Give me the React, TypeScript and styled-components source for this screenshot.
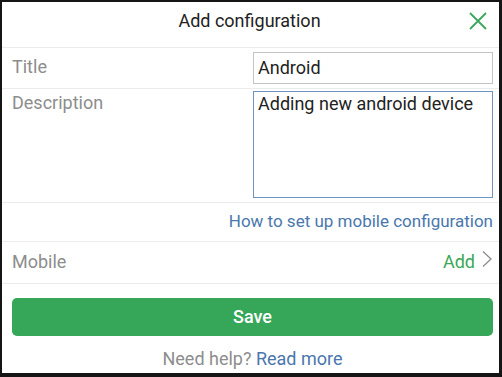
import React from 'react'
import styled, { createGlobalStyle } from 'styled-components'

const GlobalStyle = createGlobalStyle`
  body {
    margin: 0;
    font-family: Roboto, "Liberation Sans", sans-serif;
    background: #fff;
  }
`

const Frame = styled.div`
  box-sizing: border-box;
  width: 502px;
  height: 377px;
  border: solid #151515;
  border-width: 2px 3px 4px 2px;
  display: flex;
  flex-direction: column;
  background: #fff;
`

const Header = styled.header`
  display: grid;
  grid-template-columns: 1fr auto 1fr;
  align-items: start;
  box-sizing: border-box;
  height: 46px;
  padding: 8px 12px 0 10px;
  border-bottom: 1px solid #ececec;
`

const Heading = styled.h1`
  grid-column: 2;
  margin: 0;
  font-size: 18px;
  font-weight: 400;
  color: #222;
`

const CloseButton = styled.button`
  grid-column: 3;
  justify-self: end;
  display: flex;
  margin-top: 2px;
  padding: 0;
  border: 0;
  background: none;
  cursor: pointer;
`

const Row = styled.div<{ $height: number; $align?: string }>`
  display: flex;
  align-items: ${(p) => p.$align ?? 'center'};
  justify-content: space-between;
  height: ${(p) => p.$height}px;
  box-sizing: border-box;
  padding: 0 6px 0 10px;
  border-bottom: 1px solid #ececec;
`

const Label = styled.span<{ $top?: number }>`
  font-size: 18px;
  color: #8d8d8d;
  padding-top: ${(p) => p.$top ?? 0}px;
  padding-bottom: ${(p) => (p.$top === undefined ? 3 : 0)}px;
`

const fieldBase = `
  box-sizing: border-box;
  width: 240px;
  font-family: Roboto, "Liberation Sans", sans-serif;
  font-size: 18px;
  color: #222;
  background: #fff;
  outline: none;
  padding: 0 4px;
`

const TextInput = styled.input`
  ${fieldBase}
  height: 32px;
  border: 1px solid #c4c4c4;
  padding-bottom: 2px;
`

const TextArea = styled.textarea`
  ${fieldBase}
  height: 107px;
  margin-top: 2px;
  border: 1px solid #6e93c4;
  resize: none;
  line-height: 22px;
  padding-top: 1px;
`

const LinkRow = styled(Row)`
  justify-content: flex-end;
`

const Link = styled.a<{ $size?: number }>`
  font-size: ${(p) => p.$size ?? 18}px;
  color: #4a77ad;
  text-decoration: none;
  cursor: pointer;
`

const RowLink = styled(Link)`
  padding-bottom: 3px;
`

const AddAction = styled.span`
  display: flex;
  align-items: center;
  gap: 6px;
  font-size: 18px;
  color: #3aa857;
  padding-bottom: 3px;
`

const Chevron = styled.svg`
  margin-bottom: 5px;
`

const Footer = styled.div`
  display: flex;
  flex-direction: column;
  align-items: stretch;
  padding: 14px 6px 0 10px;
`

const SaveButton = styled.button`
  height: 38px;
  border: 0;
  border-radius: 5px;
  background: #36a658;
  color: #fff;
  font-family: Roboto, "Liberation Sans", sans-serif;
  font-size: 18px;
  font-weight: 500;
  padding-bottom: 3px;
  cursor: pointer;
`

const Help = styled.p`
  margin: 12px 0 0;
  text-align: center;
  font-size: 18px;
  color: #8d8d8d;
`

export default function App() {
  return (
    <>
      <GlobalStyle />
      <Frame>
        <Header>
          <Heading>Add configuration</Heading>
          <CloseButton aria-label="Close">
            <svg width="18" height="18" viewBox="0 0 18 18">
              <path d="M1 1 L17 17 M17 1 L1 17" stroke="#3ba65a" strokeWidth="1.8" fill="none" />
            </svg>
          </CloseButton>
        </Header>
        <Row $height={41}>
          <Label>Title</Label>
          <TextInput defaultValue="Android" />
        </Row>
        <Row $height={114} $align="flex-start">
          <Label $top={3}>Description</Label>
          <TextArea defaultValue="Adding new android device" />
        </Row>
        <LinkRow $height={39}>
          <RowLink $size={17}>How to set up mobile configuration</RowLink>
        </LinkRow>
        <Row $height={42}>
          <Label>Mobile</Label>
          <AddAction>
            Add
            <Chevron width="12" height="18" viewBox="0 0 12 18">
              <path d="M2 1.5 L10 9 L2 16.5" stroke="#8d8d8d" strokeWidth="1.3" fill="none" />
            </Chevron>
          </AddAction>
        </Row>
        <Footer>
          <SaveButton>Save</SaveButton>
          <Help>
            Need help? <Link>Read more</Link>
          </Help>
        </Footer>
      </Frame>
    </>
  )
}
